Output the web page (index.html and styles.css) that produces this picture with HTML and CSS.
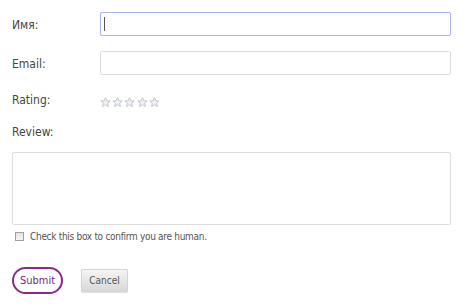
FILE: index.html
```html
<!DOCTYPE html>
<html lang="ru">
  <head>
    <meta charset="UTF-8" />
    <title>Review</title>
    <link rel="stylesheet" href="styles.css">
  </head>
  <body>
    <form class="review-form">
      <div class="row">
        <label class="label" for="name">Имя:</label>
        <div class="field-wrap">
          <input class="field focused" id="name" type="text" />
          <span class="caret"></span>
        </div>
      </div>

      <div class="row">
        <label class="label" for="email">Email:</label>
        <div class="field-wrap">
          <input class="field" id="email" type="text" />
        </div>
      </div>

      <div class="row rating-row">
        <span class="label">Rating:</span>
        <div class="stars">
          <svg class="star" viewBox="0 0 12 12"><path d="M6 0.8 L7.5 4.1 L11.1 4.4 L8.4 6.8 L9.2 10.4 L6 8.5 L2.8 10.4 L3.6 6.8 L0.9 4.4 L4.5 4.1 Z" /></svg>
          <svg class="star" viewBox="0 0 12 12"><path d="M6 0.8 L7.5 4.1 L11.1 4.4 L8.4 6.8 L9.2 10.4 L6 8.5 L2.8 10.4 L3.6 6.8 L0.9 4.4 L4.5 4.1 Z" /></svg>
          <svg class="star" viewBox="0 0 12 12"><path d="M6 0.8 L7.5 4.1 L11.1 4.4 L8.4 6.8 L9.2 10.4 L6 8.5 L2.8 10.4 L3.6 6.8 L0.9 4.4 L4.5 4.1 Z" /></svg>
          <svg class="star" viewBox="0 0 12 12"><path d="M6 0.8 L7.5 4.1 L11.1 4.4 L8.4 6.8 L9.2 10.4 L6 8.5 L2.8 10.4 L3.6 6.8 L0.9 4.4 L4.5 4.1 Z" /></svg>
          <svg class="star" viewBox="0 0 12 12"><path d="M6 0.8 L7.5 4.1 L11.1 4.4 L8.4 6.8 L9.2 10.4 L6 8.5 L2.8 10.4 L3.6 6.8 L0.9 4.4 L4.5 4.1 Z" /></svg>
        </div>
      </div>

      <label class="label review-label" for="review">Review:</label>
      <textarea class="review-box" id="review"></textarea>

      <label class="human">
        <span class="checkbox"></span>
        Check this box to confirm you are human.
      </label>

      <div class="buttons">
        <button type="button" class="btn-submit">Submit</button>
        <button type="button" class="btn-cancel">Cancel</button>
      </div>
    </form>
  </body>
</html>
```

FILE: styles.css
```css
body {
  margin: 0;
  padding: 0;
  background-color: #fff;
  font-family: 'DejaVu Sans Condensed', 'DejaVu Sans', sans-serif;
  color: #444;
}

.review-form {
  width: 439px;
  padding: 12px 0 0 12px;
  display: flex;
  flex-direction: column;
}

.row {
  display: flex;
  align-items: center;
  margin-bottom: 15px;
}

.label {
  width: 88px;
  padding-top: 2px;
  font-size: 12px;
  color: #444;
}

.field-wrap {
  flex-grow: 1;
  display: flex;
  position: relative;
}

.field {
  flex-grow: 1;
  box-sizing: border-box;
  height: 24px;
  margin: 0;
  padding: 0 4px;
  border: 1px solid #dcdcdc;
  border-radius: 2px;
  background: #fff;
  outline: none;
}

.field.focused {
  border-color: #a7b7e6;
  box-shadow: 0 0 1px #c5d0f0;
}

.caret {
  position: absolute;
  left: 4px;
  top: 5px;
  width: 1px;
  height: 14px;
  background: #555;
}

.rating-row {
  margin-top: -1px;
  margin-bottom: 14px;
}

.stars {
  display: flex;
  gap: 1.2px;
  margin-top: 8px;
}

.star {
  width: 11px;
  height: 11px;
}

.star path {
  fill: #eef0f4;
  stroke: #b9bdc6;
  stroke-width: 0.9;
  stroke-linejoin: round;
}

.review-label {
  display: block;
  margin-top: 1px;
  margin-bottom: 13px;
}

.review-box {
  box-sizing: border-box;
  width: 439px;
  height: 73px;
  margin: 0;
  border: 1px solid #dedede;
  border-radius: 2px;
  resize: none;
  outline: none;
}

.human {
  display: flex;
  align-items: center;
  margin: 6px 0 0 3px;
  font-size: 10px;
  letter-spacing: -0.3px;
  color: #555;
}

.checkbox {
  box-sizing: border-box;
  width: 9px;
  height: 9px;
  margin-right: 6px;
  border: 1px solid #a0a0a0;
  background: linear-gradient(#e4e4e4, #f6f6f6);
}

.buttons {
  display: flex;
  align-items: center;
  gap: 18px;
  margin-top: 25px;
}

.btn-submit {
  box-sizing: border-box;
  width: 51px;
  height: 27px;
  border: 2px solid #8a2a84;
  border-radius: 14px;
  background: #fff;
  color: #7a2a78;
  font-family: inherit;
  font-size: 11px;
  padding: 0;
}

.btn-cancel {
  box-sizing: border-box;
  width: 47px;
  height: 23px;
  border: 1px solid #d4d4d4;
  border-radius: 1px;
  background: linear-gradient(#f4f4f4, #d9d9d9);
  color: #555;
  font-family: inherit;
  font-size: 10px;
  padding: 0;
  box-shadow: 0 1px 1px rgba(0, 0, 0, 0.12);
}
```
